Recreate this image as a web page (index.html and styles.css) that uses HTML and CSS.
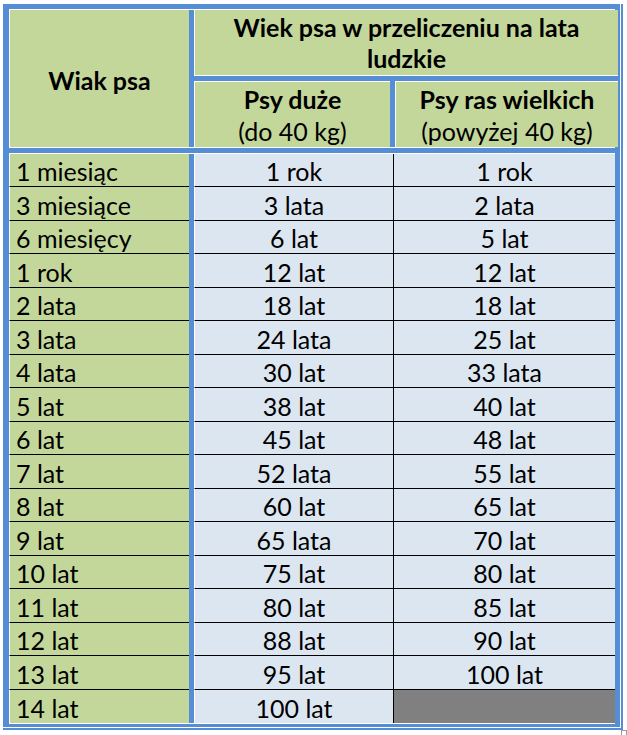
FILE: index.html
```
<!DOCTYPE html>
<html lang="pl">
<head>
<meta charset="utf-8">
<title>Wiek psa</title>
<link rel="stylesheet" href="styles.css">
</head>
<body>
<div class="page">
  <div class="frame">
    <div class="inner">
      <div class="head">
        <div class="h-age">Wiak psa</div>
        <div class="head-right">
          <div class="h-top">Wiek psa w przeliczeniu na lata<br>ludzkie</div>
          <div class="h-subrow">
            <div class="h-sub h-sub1"><span class="b">Psy duże</span><span>(do 40 kg)</span></div>
            <div class="h-sub h-sub2"><span class="b">Psy ras wielkich</span><span>(powyżej 40 kg)</span></div>
          </div>
        </div>
      </div>
      <div class="body">
        <div class="c1">1 miesiąc</div><div class="c2">1 rok</div><div class="c3">1 rok</div>
        <div class="c1">3 miesiące</div><div class="c2">3 lata</div><div class="c3">2 lata</div>
        <div class="c1">6 miesięcy</div><div class="c2">6 lat</div><div class="c3">5 lat</div>
        <div class="c1">1 rok</div><div class="c2">12 lat</div><div class="c3">12 lat</div>
        <div class="c1">2 lata</div><div class="c2">18 lat</div><div class="c3">18 lat</div>
        <div class="c1">3 lata</div><div class="c2">24 lata</div><div class="c3">25 lat</div>
        <div class="c1">4 lata</div><div class="c2">30 lat</div><div class="c3">33 lata</div>
        <div class="c1">5 lat</div><div class="c2">38 lat</div><div class="c3">40 lat</div>
        <div class="c1">6 lat</div><div class="c2">45 lat</div><div class="c3">48 lat</div>
        <div class="c1">7 lat</div><div class="c2">52 lata</div><div class="c3">55 lat</div>
        <div class="c1">8 lat</div><div class="c2">60 lat</div><div class="c3">65 lat</div>
        <div class="c1">9 lat</div><div class="c2">65 lata</div><div class="c3">70 lat</div>
        <div class="c1">10 lat</div><div class="c2">75 lat</div><div class="c3">80 lat</div>
        <div class="c1">11 lat</div><div class="c2">80 lat</div><div class="c3">85 lat</div>
        <div class="c1">12 lat</div><div class="c2">88 lat</div><div class="c3">90 lat</div>
        <div class="c1">13 lat</div><div class="c2">95 lat</div><div class="c3">100 lat</div>
        <div class="c1 last">14 lat</div><div class="c2 last">100 lat</div><div class="c3 last empty"></div>
      </div>
    </div>
  </div>
  <div class="handle"></div>
</div>
</body>
</html>
```
FILE: styles.css
```
* { box-sizing: border-box; }

body {
  margin: 0;
  background: #ffffff;
  color: #000000;
  font-family: Lato, "Open Sans", sans-serif;
  font-size: 25px;
}

.page {
  padding: 4px 0 0 3px;
}

.frame {
  width: 620px;
  background: #558ed5;
  border-right: 2px solid #558ed5;
  border-bottom: 2px solid #558ed5;
}

.inner {
  display: flex;
  flex-direction: column;
  row-gap: 5px;
  padding: 5px 5px 3px 6px;
  border-right: 1px solid #ffffff;
  border-bottom: 1px solid #ffffff;
}

/* header */
.head {
  display: flex;
  height: 139px;
  border-top: 1px solid #ffffff;
  border-bottom: 1px solid #ffffff;
}

.h-age {
  width: 180px;
  margin-right: 5px;
  background: #c4d79b;
  border-left: 1px solid #ffffff;
  display: flex;
  align-items: center;
  justify-content: center;
  font-weight: 700;
  padding-top: 2px;
}

.head-right {
  width: 424px;
  margin-right: -3px;
  display: flex;
  flex-direction: column;
  row-gap: 5px;
}

.h-top {
  height: 66px;
  background: #c4d79b;
  border-left: 1px solid #ffffff;
  border-bottom: 1px solid #ffffff;
  font-weight: 700;
  text-align: center;
  line-height: 31px;
  padding-top: 2px;
}

.h-subrow {
  display: flex;
  column-gap: 5px;
  height: 66px;
}

.h-sub {
  background: #c4d79b;
  border-top: 1px solid #ffffff;
  border-left: 1px solid #ffffff;
  display: flex;
  flex-direction: column;
  align-items: center;
  justify-content: center;
  line-height: 32px;
  padding-top: 1px;
}

.h-sub1 { width: 196px; }
.h-sub2 { width: 223px; }

.b { font-weight: 700; }

/* body */
.body {
  display: grid;
  grid-template-columns: 185px 200px 221px;
  grid-template-rows: repeat(17, 1fr);
  height: 571px;
  border-top: 1px solid #ffffff;
  border-bottom: 1px solid #ffffff;
}

.c1, .c2, .c3 {
  display: flex;
  align-items: flex-end;
  line-height: 28px;
  padding-bottom: 1px;
  border-bottom: 1px solid #000000;
  white-space: nowrap;
}

.c1 {
  width: 180px;
  background: #c4d79b;
  border-left: 1px solid #ffffff;
  padding-left: 6px;
}

.c2 {
  background: #dce6f1;
  border-left: 1px solid #ffffff;
  border-right: 1px solid #000000;
  justify-content: center;
}

.c3 {
  background: #dce6f1;
  justify-content: center;
}

.last { border-bottom: none; }

.empty { background: #808080; }

.handle {
  margin-left: 618px;
  width: 6px;
  height: 5px;
  border: 1px solid #9a9a9a;
  border-bottom: none;
  background: #ffffff;
}
```
